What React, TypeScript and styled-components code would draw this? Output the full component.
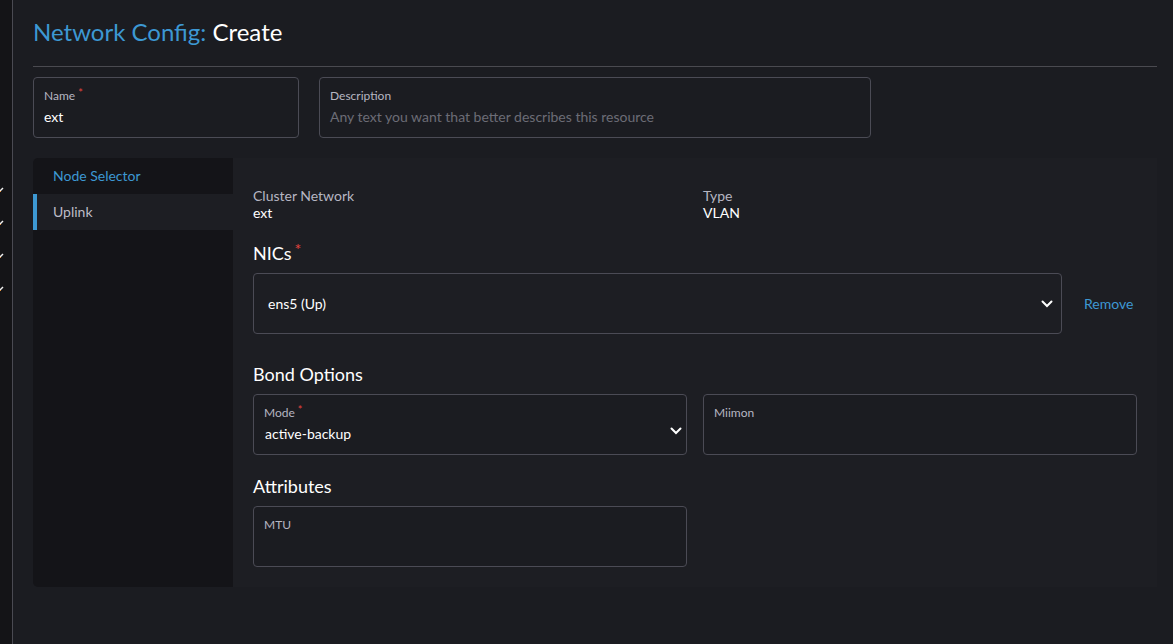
import styled, { createGlobalStyle } from "styled-components";

const GlobalStyle = createGlobalStyle`
    html, body {
        margin: 0;
        padding: 0;
        background: #1b1c21;
        font-family: Lato, "Noto Sans", sans-serif;
        color: #e6e6e6;
    }
    * {
        box-sizing: border-box;
    }
`;

const Page = styled.div`
    display: flex;
    flex-direction: row;
    width: 1173px;
    height: 644px;
    overflow: hidden;
    background: #1b1c21;
`;

const SideStrip = styled.div`
    display: flex;
    flex-direction: column;
    width: 13px;
    flex-shrink: 0;
    background: #141417;
    border-right: 1px solid #4a4a52;
    padding-top: 183px;
    gap: 22px;
`;

const StripMark = styled.svg`
    width: 5px;
    height: 11px;
    display: block;
`;

const Main = styled.main`
    flex: 1;
    padding: 0 16px 0 20px;
    display: flex;
    flex-direction: column;
`;

const Header = styled.div`
    height: 67px;
    display: flex;
    align-items: center;
    border-bottom: 1px solid #4a4a50;
    padding-bottom: 2px;
`;

const Title = styled.h1`
    margin: 0;
    font-size: 24px;
    font-weight: 400;
    color: #ffffff;
    line-height: 30px;
`;

const TitleLink = styled.span`
    color: #3d98d3;
`;

const TopGrid = styled.div`
    display: grid;
    grid-template-columns: repeat(12, 1fr);
    column-gap: 20px;
    margin-top: 10px;
`;

const Field = styled.div<{ $span: number }>`
    grid-column: span ${props => props.$span};
    height: 61px;
    border: 1px solid #4b4b55;
    border-radius: 4px;
    padding: 10px 10px 0 10px;
    display: flex;
    flex-direction: column;
    background: #1b1c21;
`;

const FieldLabel = styled.label`
    font-size: 12px;
    line-height: 15px;
    color: #b6b6c2;
`;

const Required = styled.span`
    color: #e5433e;
    margin-left: 3px;
    font-size: 0.9em;
    line-height: 0;
    position: relative;
    top: -0.3em;
`;

const FieldValue = styled.div<{ $placeholder?: boolean }>`
    font-size: 14px;
    line-height: 17px;
    margin-top: 5px;
    color: ${props => props.$placeholder ? "#6c6c76" : "#ffffff"};
`;

const Tabbed = styled.div`
    display: flex;
    flex-direction: row;
    margin-top: 20px;
    height: 429px;
`;

const TabList = styled.ul`
    list-style: none;
    margin: 0;
    padding: 0;
    width: 200px;
    flex-shrink: 0;
    background: #141418;
    border-radius: 5px 0 0 5px;
    overflow: hidden;
`;

const Tab = styled.li<{ $active?: boolean }>`
    height: 36px;
    display: flex;
    align-items: center;
    padding-left: ${props => props.$active ? 16 : 20}px;
    padding-bottom: 1px;
    font-size: 14px;
    color: ${props => props.$active ? "#bcbcc6" : "#3d98d3"};
    background: ${props => props.$active ? "#1d1e23" : "transparent"};
    border-left: ${props => props.$active ? "4px solid #3d98d3" : "none"};
`;

const TabContent = styled.section`
    flex: 1;
    background: #1d1e23;
    padding: 29px 20px 20px 20px;
    display: flex;
    flex-direction: column;
`;

const InfoRow = styled.div`
    display: grid;
    grid-template-columns: 1fr 1fr;
    column-gap: 16px;
`;

const InfoItem = styled.div`
    display: flex;
    flex-direction: column;
    font-size: 14px;
    line-height: 17px;
`;

const InfoLabel = styled.span`
    color: #b6b6c2;
`;

const InfoValue = styled.span`
    color: #ffffff;
`;

const SectionTitle = styled.h3<{ $top: number }>`
    margin: ${props => props.$top}px 0 9px 0;
    font-size: 18px;
    font-weight: 400;
    line-height: 22px;
    color: #ffffff;
`;

const NicRow = styled.div`
    display: flex;
    flex-direction: row;
    align-items: center;
`;

const SelectBox = styled.div`
    flex: 1;
    height: 61px;
    border: 1px solid #4b4b55;
    border-radius: 4px;
    display: flex;
    align-items: center;
    justify-content: space-between;
    padding: 0 8px 0 14px;
    font-size: 14px;
    color: #ffffff;
`;

const Chevron = styled.svg`
    width: 12px;
    height: 8px;
    display: block;
`;

const RemoveButton = styled.button`
    width: 75px;
    padding: 0 0 0 22px;
    background: none;
    border: none;
    text-align: left;
    font-family: inherit;
    font-size: 14px;
    color: #3d98d3;
`;

const TwoCol = styled.div`
    display: grid;
    grid-template-columns: 1fr 1fr;
    column-gap: 16px;
`;

const ModeValueRow = styled.div`
    display: flex;
    flex-direction: row;
    justify-content: space-between;
    align-items: center;
    margin-right: -6px;
    padding-left: 1px;
`;

const ChevronIcon = () => (
    <Chevron viewBox="0 0 12 8">
        <path d="M1.5 1.5 L6 6 L10.5 1.5" fill="none" stroke="#ffffff" strokeWidth="2" strokeLinecap="round" />
    </Chevron>
);

const marks = [0, 1, 2, 3];

export default function App()
{
    return (
        <>
            <GlobalStyle />
            <Page>
                <SideStrip>
                    {marks.map( m => (
                        <StripMark key={m} viewBox="0 0 5 11">
                            <path d="M0 8 L3 5" stroke="#f0f0f0" strokeWidth="1.5" />
                            <path d="M0 9 L1 8" stroke="#e89a4a" strokeWidth="1" />
                        </StripMark>
                    ) )}
                </SideStrip>
                <Main>
                    <Header>
                        <Title><TitleLink>Network Config:</TitleLink> Create</Title>
                    </Header>
                    <TopGrid>
                        <Field $span={3}>
                            <FieldLabel>Name<Required>*</Required></FieldLabel>
                            <FieldValue>ext</FieldValue>
                        </Field>
                        <Field $span={6}>
                            <FieldLabel>Description</FieldLabel>
                            <FieldValue $placeholder>Any text you want that better describes this resource</FieldValue>
                        </Field>
                    </TopGrid>
                    <Tabbed>
                        <TabList>
                            <Tab>Node Selector</Tab>
                            <Tab $active>Uplink</Tab>
                        </TabList>
                        <TabContent>
                            <InfoRow>
                                <InfoItem>
                                    <InfoLabel>Cluster Network</InfoLabel>
                                    <InfoValue>ext</InfoValue>
                                </InfoItem>
                                <InfoItem>
                                    <InfoLabel>Type</InfoLabel>
                                    <InfoValue>VLAN</InfoValue>
                                </InfoItem>
                            </InfoRow>
                            <SectionTitle $top={21}>NICs<Required>*</Required></SectionTitle>
                            <NicRow>
                                <SelectBox>
                                    <span>ens5 (Up)</span>
                                    <ChevronIcon />
                                </SelectBox>
                                <RemoveButton>Remove</RemoveButton>
                            </NicRow>
                            <SectionTitle $top={29}>Bond Options</SectionTitle>
                            <TwoCol>
                                <Field $span={1}>
                                    <FieldLabel>Mode<Required>*</Required></FieldLabel>
                                    <ModeValueRow>
                                        <FieldValue>active-backup</FieldValue>
                                        <ChevronIcon />
                                    </ModeValueRow>
                                </Field>
                                <Field $span={1}>
                                    <FieldLabel>Miimon</FieldLabel>
                                </Field>
                            </TwoCol>
                            <SectionTitle $top={20}>Attributes</SectionTitle>
                            <TwoCol>
                                <Field $span={1}>
                                    <FieldLabel>MTU</FieldLabel>
                                </Field>
                            </TwoCol>
                        </TabContent>
                    </Tabbed>
                </Main>
            </Page>
        </>
    );
}
